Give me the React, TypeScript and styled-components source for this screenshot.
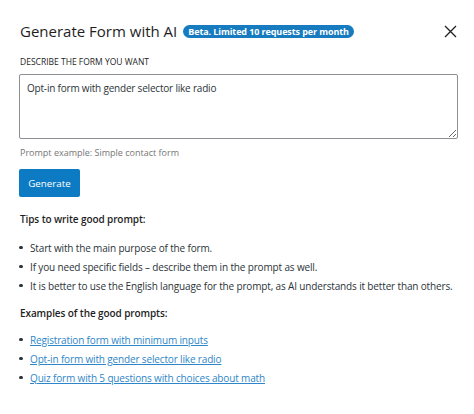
import React from "react";
import styled, { createGlobalStyle } from "styled-components";

const Global = createGlobalStyle`
  html, body { margin: 0; padding: 0; background: #fff; }
  body { font-family: "Open Sans", "Noto Sans", "Liberation Sans", sans-serif; color: #1e1e1e; }
  * { box-sizing: border-box; }
`;

const Dialog = styled.div`
  width: 474px;
  height: 414px;
  padding: 20px 16px 0 19px;
  background: #fff;
`;

const Header = styled.div`
  display: flex;
  align-items: center;
  height: 22px;
`;

const Title = styled.h1`
  margin: 0 0 0 1px;
  font-size: 15px;
  font-weight: 400;
  color: #1e1e1e;
  white-space: nowrap;
`;

const Badge = styled.span`
  margin-left: 6px;
  height: 13px;
  padding: 0 5px;
  border-radius: 7px;
  background: #167bbf;
  color: #fff;
  font-size: 9px;
  font-weight: 700;
  letter-spacing: -0.1px;
  line-height: 13px;
  white-space: nowrap;
`;

const Close = styled.button`
  margin-left: auto;
  margin-right: 1px;
  width: 14px;
  height: 14px;
  padding: 0;
  border: 0;
  background: none;
  display: flex;
  align-items: center;
  justify-content: center;
`;

const Label = styled.label`
  display: block;
  margin: 14px 0 0 1px;
  font-size: 8.5px;
  line-height: 12px;
  text-transform: uppercase;
  color: #1e1e1e;
`;

const Area = styled.textarea`
  display: block;
  margin-top: 6px;
  width: 439px;
  height: 65px;
  padding: 5px 7px;
  border: 1px solid #8c8f94;
  border-radius: 2px;
  font-family: inherit;
  font-size: 10px;
  letter-spacing: -0.2px;
  line-height: 16px;
  color: #2c3338;
  resize: vertical;
`;

const Hint = styled.p`
  margin: 7px 0 0 1px;
  font-size: 9px;
  line-height: 13px;
  color: #757575;
`;

const Button = styled.button`
  display: block;
  margin-top: 10px;
  height: 28px;
  width: 61px;
  padding: 0;
  border: 0;
  border-radius: 2px;
  background: #0c7bc3;
  color: #fff;
  font-family: inherit;
  font-size: 9.8px;
  font-weight: 500;
`;

const Heading = styled.p<{ $gap: number }>`
  margin: ${(p) => p.$gap}px 0 0 1px;
  font-size: 10px;
  letter-spacing: -0.1px;
  line-height: 14px;
  font-weight: 600;
  color: #1e1e1e;
`;

const List = styled.ul<{ $gap: number }>`
  margin: ${(p) => p.$gap}px 0 0 0;
  padding: 0;
  list-style: none;
`;

const Item = styled.li`
  display: flex;
  align-items: center;
  height: 19px;
  font-size: 10px;
  letter-spacing: -0.15px;
  color: #2c3338;
  white-space: nowrap;
  &::before {
    content: "";
    width: 3.5px;
    height: 3.5px;
    border-radius: 50%;
    background: #2c3338;
    margin: 0 7.5px 0 0;
    flex: none;
  }
`;

const Link = styled.a`
  color: #2e86c8;
  text-decoration: underline;
  text-underline-offset: 1px;
`;

const tips = [
  "Start with the main purpose of the form.",
  "If you need specific fields – describe them in the prompt as well.",
  "It is better to use the English language for the prompt, as AI understands it better than others.",
];

const examples = [
  "Registration form with minimum inputs",
  "Opt-in form with gender selector like radio",
  "Quiz form with 5 questions with choices about math",
];

export default function App() {
  return (
    <>
      <Global />
      <Dialog>
        <Header>
          <Title>Generate Form with AI</Title>
          <Badge>Beta. Limited 10 requests per month</Badge>
          <Close aria-label="Close">
            <svg width="13" height="13" viewBox="0 0 13 13">
              <path d="M1 1 L12 12 M12 1 L1 12" stroke="#1e1e1e" strokeWidth="1.3" fill="none" />
            </svg>
          </Close>
        </Header>
        <Label>Describe the form you want</Label>
        <Area defaultValue="Opt-in form with gender selector like radio" />
        <Hint>Prompt example: Simple contact form</Hint>
        <Button>Generate</Button>
        <Heading $gap={15}>Tips to write good prompt:</Heading>
        <List $gap={12}>
          {tips.map((t) => (
            <Item key={t}>{t}</Item>
          ))}
        </List>
        <Heading $gap={11}>Examples of the good prompts:</Heading>
        <List $gap={10}>
          {examples.map((e) => (
            <Item key={e}>
              <Link href="#">{e}</Link>
            </Item>
          ))}
        </List>
      </Dialog>
    </>
  );
}
